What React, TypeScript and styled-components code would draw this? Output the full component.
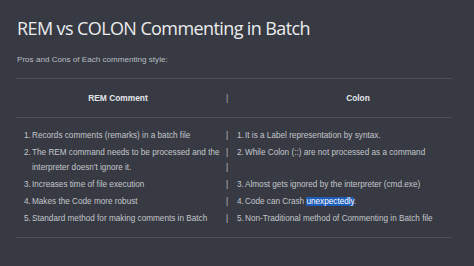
import React from 'react';
import styled, { createGlobalStyle } from 'styled-components';

const GlobalStyle = createGlobalStyle`
  html, body {
    margin: 0;
    padding: 0;
    background: #373a42;
  }
  body {
    width: 474px;
    height: 266px;
    overflow: hidden;
  }
`;

const Page = styled.main`
  box-sizing: border-box;
  width: 474px;
  height: 266px;
  padding: 15px 22px 0 16px;
  background: #373a42;
  color: #c3c6cc;
  font-family: 'Liberation Sans', Arial, sans-serif;
`;

const Title = styled.h1`
  margin: 0 0 0 1px;
  font-family: 'Open Sans', 'Noto Sans', sans-serif;
  font-weight: 400;
  font-size: 18px;
  line-height: 26px;
  letter-spacing: -0.6px;
  color: #ebecee;
`;

const Subtitle = styled.p`
  margin: 13px 0 0 1px;
  font-size: 8.1px;
  line-height: 12px;
  color: #b9bcc2;
`;

const Table = styled.div`
  margin-top: 12px;
  display: grid;
  grid-template-columns: 204px 14px 1fr;
  border-top: 1px solid #4b4f58;
  border-bottom: 1px solid #4b4f58;
`;

const HeadCell = styled.div<{ $shift?: number; $plain?: boolean }>`
  height: 38px;
  display: flex;
  align-items: center;
  justify-content: center;
  padding-left: ${p => p.$shift ?? 0}px;
  font-size: 8.4px;
  font-weight: ${p => (p.$plain ? 400 : 700)};
  color: ${p => (p.$plain ? '#b3b6bc' : '#e4e6ea')};
  border-bottom: 1px solid #4b4f58;
`;

const Body = styled.div`
  grid-column: 1 / -1;
  display: grid;
  grid-template-columns: 204px 14px 1fr;
  row-gap: 2px;
  padding: 10px 0 11px;
`;

const Item = styled.div<{ $indent: number }>`
  display: flex;
  padding-left: ${p => p.$indent}px;
  font-size: 8.2px;
  line-height: 15px;
  white-space: nowrap;
`;

const Num = styled.span`
  flex: none;
  width: 8px;
`;

const Bar = styled.div`
  text-align: center;
  font-size: 8.2px;
  line-height: 15px;
  color: #c3c6cc;
  white-space: pre;
`;

const Selected = styled.span`
  background: #1d5cb8;
  color: #ffffff;
`;

type Row = { rem: React.ReactNode; colon: React.ReactNode; lines?: number };

const rows: Row[] = [
  { rem: 'Records comments (remarks) in a batch file', colon: 'It is a Label representation by syntax.' },
  {
    rem: (
      <>
        The REM command needs to be processed and the
        <br />
        interpreter doesn't ignore it.
      </>
    ),
    colon: 'While Colon (::) are not processed as a command',
    lines: 2,
  },
  { rem: 'Increases time of file execution', colon: 'Almost gets ignored by the interpreter (cmd.exe)' },
  {
    rem: 'Makes the Code more robust',
    colon: (
      <>
        Code can Crash <Selected>unexpectedly</Selected>.
      </>
    ),
  },
  { rem: 'Standard method for making comments in Batch', colon: 'Non-Traditional method of Commenting in Batch file' },
];

export default function App() {
  return (
    <Page>
      <GlobalStyle />
      <Title>REM vs COLON Commenting in Batch</Title>
      <Subtitle>Pros and Cons of Each commenting style:</Subtitle>
      <Table>
        <HeadCell>REM Comment</HeadCell>
        <HeadCell $plain>|</HeadCell>
        <HeadCell $shift={30}>Colon</HeadCell>
        <Body>
          {rows.map((row, i) => (
            <React.Fragment key={i}>
              <Item $indent={8}>
                <Num>{i + 1}.</Num>
                <span>{row.rem}</span>
              </Item>
              <Bar>{row.lines === 2 ? '|\n|' : '|'}</Bar>
              <Item $indent={3}>
                <Num>{i + 1}.</Num>
                <span>{row.colon}</span>
              </Item>
            </React.Fragment>
          ))}
        </Body>
      </Table>
    </Page>
  );
}
